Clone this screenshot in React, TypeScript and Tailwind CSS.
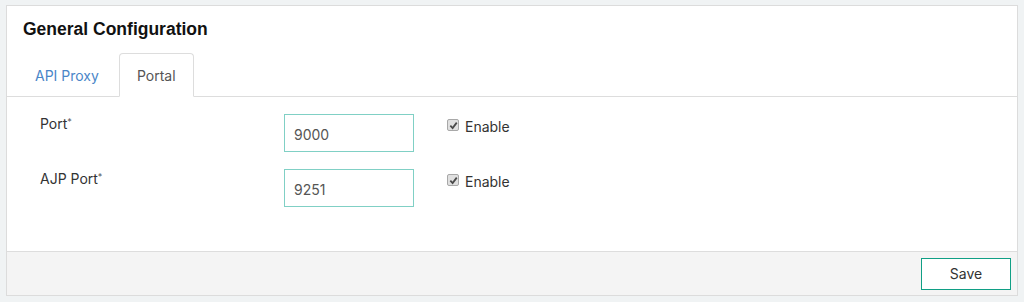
import { useState } from 'react';

type PortRow = {
  label: string;
  value: string;
  enabled: boolean;
};

const rows: PortRow[] = [
  { label: 'Port', value: '9000', enabled: true },
  { label: 'AJP Port', value: '9251', enabled: true },
];

function CheckMark() {
  return (
    <span className="mt-[2px] flex h-[12px] w-[12px] items-center justify-center rounded-[2px] border border-[#a8a8a8] bg-[#e0e0e0]">
      <svg width="9" height="9" viewBox="0 0 10 10">
        <path d="M1.5 5.2 L4 7.8 L8.6 1.8" fill="none" stroke="#4a4a4a" strokeWidth="2" />
      </svg>
    </span>
  );
}

export default function App() {
  const [tab, setTab] = useState('portal');

  return (
    <div className="h-[302px] w-full bg-[#f0f3f4] px-[6px] pt-[5px] pb-[6px] font-['Inter',sans-serif]">
      <div className="flex h-full flex-col border border-[#dcdcdc] bg-white">
        {/* Title */}
        <div className="flex h-[47px] items-center pl-[16px]">
          <h2 className="font-['Liberation_Sans',Arial,sans-serif] text-[17.5px] font-bold text-[#111]">
            General Configuration
          </h2>
        </div>

        {/* Tabs */}
        <div className="flex h-[44px] items-end gap-[2px] border-b border-[#dddddd] pl-[10px]">
          <button
            onClick={() => setTab('api')}
            className={
              tab === 'api'
                ? '-mb-px flex h-[44px] items-center rounded-t-[4px] border border-[#dddddd] border-b-white bg-white px-[17px] text-[14px] text-[#555]'
                : '-mb-px flex h-[44px] items-center border border-transparent px-[17px] text-[14px] text-[#4a86c8]'
            }
          >
            API Proxy
          </button>
          <button
            onClick={() => setTab('portal')}
            className={
              tab === 'portal'
                ? '-mb-px flex h-[44px] items-center rounded-t-[4px] border border-[#dddddd] border-b-white bg-white px-[17px] text-[14px] text-[#555]'
                : '-mb-px flex h-[44px] items-center border border-transparent px-[17px] text-[14px] text-[#4a86c8]'
            }
          >
            Portal
          </button>
        </div>

        {/* Form */}
        <div className="flex flex-1 flex-col gap-[17px] pt-[17px] pl-[33px]">
          {rows.map((row) => (
            <div key={row.label} className="flex items-start">
              <label className="w-[244px] text-[14px] leading-[20px] text-[#333]">
                {row.label}
                <sup className="text-[9px] text-[#555]">*</sup>
              </label>
              <input
                type="text"
                defaultValue={row.value}
                className="h-[38px] w-[130px] border border-[#80d0c5] px-[9px] pt-[2px] text-[14px] text-[#555] outline-none"
              />
              <div className="ml-[33px] flex items-start gap-[6px] pt-[3px]">
                {row.enabled && <CheckMark />}
                <span className="text-[14px] leading-[20px] text-[#333]">Enable</span>
              </div>
            </div>
          ))}
        </div>

        {/* Footer */}
        <div className="flex h-[44px] items-center justify-end border-t border-[#dddddd] bg-[#f4f4f4] pr-[6px]">
          <button className="h-[32px] w-[90px] border border-[#109f85] bg-white text-[14px] text-[#333]">
            Save
          </button>
        </div>
      </div>
    </div>
  );
}
